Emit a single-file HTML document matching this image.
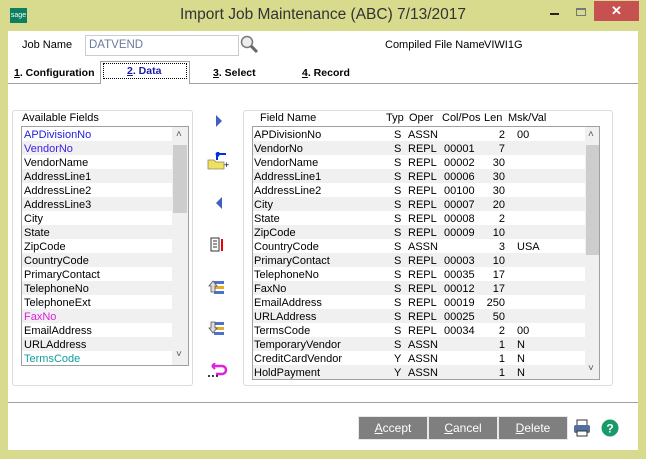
<!DOCTYPE html><html><head><style>
*{margin:0;padding:0;box-sizing:border-box}
body{width:646px;height:459px;background:#d8da8e;font-family:"Liberation Sans",Arial,sans-serif;font-size:11px;position:relative;overflow:hidden;color:#000}
.a{position:absolute}
.row{position:absolute;height:14px;line-height:14px;white-space:nowrap}
.alt{background:#f0f0f0}
.btn{position:absolute;top:417px;width:68px;height:22px;background:#7f7f7f;color:#fff;text-align:center;line-height:22px;font-size:12px;outline:1px solid #e8e8e8}
u{text-decoration:underline}
</style></head><body>
<div class="a" style="left:10px;top:8px;width:17px;height:15px;background:#0b7f5e;color:#fff;font-size:7px;line-height:15px;text-align:center">sage</div>
<div class="a" style="left:0;width:646px;top:6px;text-align:center;font-size:15.5px;color:#333">Import Job Maintenance (ABC) 7/13/2017</div>
<div class="a" style="left:550px;top:13px;width:9px;height:2px;background:#222"></div>
<div class="a" style="left:576px;top:8px;width:10px;height:8px;border:1px solid #777;border-top-width:2px"></div>
<div class="a" style="left:594px;top:1px;width:45px;height:20px;background:#c75050;color:#fff;text-align:center;line-height:20px;font-size:13px;font-weight:bold">✕</div>
<div class="a" style="left:8px;top:31px;width:630px;height:419px;background:#fff"></div>
<div class="a" style="left:22px;top:39px">Job Name</div>
<div class="a" style="left:85px;top:35px;width:154px;height:21px;border:1px solid #ccc;color:#6a7a9a;padding:3px 3px;font-size:11.5px">DATVEND</div>
<svg class="a" style="left:240px;top:35px" width="20" height="20"><circle cx="7" cy="7" r="5.5" fill="#eee" stroke="#777" stroke-width="1.5"/><line x1="11" y1="11" x2="17" y2="17" stroke="#666" stroke-width="3"/></svg>
<div class="a" style="left:385px;top:39px">Compiled File Name</div>
<div class="a" style="left:484px;top:39px">VIWI1G</div>
<div class="a" style="left:8px;top:83px;width:630px;height:1px;background:#a0a0a0"></div>
<div class="a" style="left:100px;top:61px;width:90px;height:23px;border:1px solid #a0a0a0;border-bottom:none;background:#fff"></div>
<div class="a" style="left:103px;top:63px;width:84px;height:16px;border:1px dotted #000"></div>
<div class="a" style="left:14px;top:67px;font-weight:bold;font-size:10.5px"><u>1</u>. Configuration</div>
<div class="a" style="left:127px;top:65px;font-weight:bold;font-size:10.5px;color:#1a1aa8"><u>2</u>. Data</div>
<div class="a" style="left:213px;top:67px;font-weight:bold;font-size:10.5px"><u>3</u>. Select</div>
<div class="a" style="left:302px;top:67px;font-weight:bold;font-size:10.5px"><u>4</u>. Record</div>
<div class="a" style="left:12px;top:110px;width:181px;height:276px;border:1px solid #dcdcdc;border-radius:3px"></div>
<div class="a" style="left:22px;top:112px">Available Fields</div>
<div class="a" style="left:21px;top:126px;width:168px;height:240px;border:1px solid #a0a0a0;overflow:hidden">
<div class="a" style="left:150px;top:0;width:16px;height:238px;background:#f0f0f0"></div>
<div class="a" style="left:151px;top:18px;width:14px;height:68px;background:#cdcdcd"></div>
<div class="a" style="left:154px;top:2px;font-size:10px;color:#555">˄</div>
<div class="a" style="left:154px;top:222px;font-size:10px;color:#555">˅</div>
</div>
<div class="a" style="left:243px;top:110px;width:370px;height:276px;border:1px solid #dcdcdc;border-radius:3px"></div>
<div class="a" style="left:260px;top:112px">Field Name</div>
<div class="a" style="left:386px;top:112px">Typ</div>
<div class="a" style="left:409px;top:112px">Oper</div>
<div class="a" style="left:442px;top:112px">Col/Pos</div>
<div class="a" style="left:484px;top:112px">Len</div>
<div class="a" style="left:508px;top:112px">Msk/Val</div>
<div class="a" style="left:252px;top:126px;width:348px;height:254px;border:1px solid #a0a0a0;overflow:hidden">
<div class="a" style="left:332px;top:0;width:15px;height:252px;background:#f0f0f0"></div>
<div class="a" style="left:333px;top:18px;width:13px;height:110px;background:#cdcdcd"></div>
<div class="a" style="left:335px;top:2px;font-size:10px;color:#555">˄</div>
<div class="a" style="left:335px;top:236px;font-size:10px;color:#555">˅</div>
</div>
<div id="L"></div><div id="R"></div>
<svg class="a" style="left:214px;top:114px" width="10" height="14"><path d="M2 1 L8 7 L2 13Z" fill="#4060c0"/></svg>
<svg class="a" style="left:206px;top:152px" width="24" height="18"><path d="M2 8 h6 l2 2 h8 v7 h-16z" fill="#f0e060" stroke="#886" stroke-width=".8"/><path d="M10 2 h10 M10 2 l3 -2 M10 2 l3 2 M11 2 v6" stroke="#0030e0" stroke-width="2" fill="none"/><text x="18" y="16" font-size="9">+</text></svg>
<svg class="a" style="left:214px;top:196px" width="10" height="14"><path d="M8 1 L2 7 L8 13Z" fill="#4060c0"/></svg>
<svg class="a" style="left:210px;top:237px" width="16" height="16"><rect x="1" y="1" width="8" height="13" fill="#fff" stroke="#333"/><path d="M3 4h4M3 7h4M3 10h4" stroke="#333"/><path d="M12 2v12" stroke="#e00" stroke-width="2"/></svg>
<svg class="a" style="left:208px;top:279px" width="18" height="16"><rect x="6" y="2" width="10" height="3" fill="#5070d0"/><rect x="6" y="7" width="10" height="3" fill="#e0b020"/><rect x="6" y="12" width="10" height="3" fill="#5070d0"/><path d="M5 2 L1 7 h2 v6 h4 v-6 h2z" fill="#ddd" stroke="#555" stroke-width=".8"/></svg>
<svg class="a" style="left:208px;top:320px" width="18" height="16"><rect x="6" y="2" width="10" height="3" fill="#5070d0"/><rect x="6" y="7" width="10" height="3" fill="#e0b020"/><rect x="6" y="12" width="10" height="3" fill="#5070d0"/><path d="M3 2 h4 v6 h2 L5 13 L1 8 h2z" fill="#ddd" stroke="#555" stroke-width=".8"/></svg>
<svg class="a" style="left:206px;top:363px" width="22" height="16"><path d="M6 3 h10 a4 4 0 0 1 0 8 h-6" stroke="#e020e0" stroke-width="2.5" fill="none"/><path d="M6 3 l3 -3 M6 3 l3 3" stroke="#e020e0" stroke-width="2"/><path d="M2 13h2M6 13h2M10 13h2" stroke="#000" stroke-width="1.5"/></svg>
<div class="a" style="left:8px;top:402px;width:630px;height:1px;background:#a0a0a0"></div>
<div class="btn" style="left:359px"><u>A</u>ccept</div>
<div class="btn" style="left:429px"><u>C</u>ancel</div>
<div class="btn" style="left:499px"><u>D</u>elete</div>
<svg class="a" style="left:573px;top:419px" width="18" height="18"><rect x="4" y="1" width="10" height="6" fill="#fff" stroke="#333"/><rect x="1" y="6" width="16" height="8" rx="2" fill="#5070a0"/><rect x="4" y="12" width="10" height="5" fill="#fff" stroke="#333"/></svg>
<svg class="a" style="left:601px;top:419px" width="18" height="18"><circle cx="9" cy="9" r="8.5" fill="#1a9a6a"/><text x="9" y="13.5" font-size="12" font-weight="bold" fill="#fff" text-anchor="middle" font-family="Liberation Sans">?</text></svg>
<script>
var L=[["APDivisionNo","#2020e0"],["VendorNo","#4020e0"],["VendorName"],["AddressLine1"],["AddressLine2"],["AddressLine3"],["City"],["State"],["ZipCode"],["CountryCode"],["PrimaryContact"],["TelephoneNo"],["TelephoneExt"],["FaxNo","#e020e0"],["EmailAddress"],["URLAddress"],["TermsCode","#10a0a0"]];
var h="";L.forEach(function(r,i){if(i*14+14>240)return;h+='<div class="row'+(i%2?' alt':'')+'" style="left:22px;top:'+(127+i*14)+'px;width:150px;padding-left:2px;padding-top:1px;color:'+(r[1]||'#000')+'">'+r[0]+'</div>'});
document.getElementById('L').innerHTML=h;
var R=[["APDivisionNo","S","ASSN","","2","00"],["VendorNo","S","REPL","00001","7",""],["VendorName","S","REPL","00002","30",""],["AddressLine1","S","REPL","00006","30",""],["AddressLine2","S","REPL","00100","30",""],["City","S","REPL","00007","20",""],["State","S","REPL","00008","2",""],["ZipCode","S","REPL","00009","10",""],["CountryCode","S","ASSN","","3","USA"],["PrimaryContact","S","REPL","00003","10",""],["TelephoneNo","S","REPL","00035","17",""],["FaxNo","S","REPL","00012","17",""],["EmailAddress","S","REPL","00019","250",""],["URLAddress","S","REPL","00025","50",""],["TermsCode","S","REPL","00034","2","00"],["TemporaryVendor","S","ASSN","","1","N"],["CreditCardVendor","Y","ASSN","","1","N"],["HoldPayment","Y","ASSN","","1","N"]];
h="";R.forEach(function(r,i){var t=127+i*14;h+='<div class="row'+(i%2?' alt':'')+'" style="left:253px;top:'+t+'px;width:332px;padding-top:1px"><span class="a" style="left:1px">'+r[0]+'</span><span class="a" style="left:141px">'+r[1]+'</span><span class="a" style="left:155px">'+r[2]+'</span><span class="a" style="left:191px">'+r[3]+'</span><span class="a" style="right:80px">'+r[4]+'</span><span class="a" style="left:264px">'+r[5]+'</span></div>'});
document.getElementById('R').innerHTML=h;
</script>
</body></html>
